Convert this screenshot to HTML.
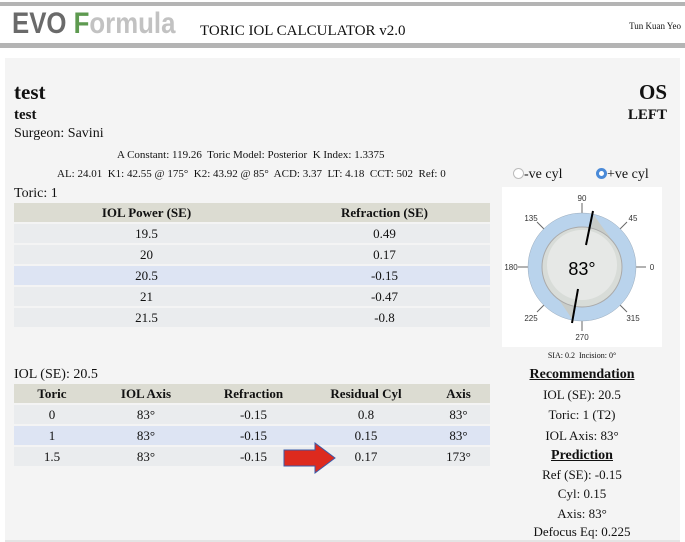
<!DOCTYPE html>
<html><head><style>
body{margin:0;width:685px;height:542px;background:#fff;position:relative;overflow:hidden;font-family:"Liberation Serif",serif;color:#111}
.a{position:absolute;white-space:nowrap}
.bar{position:absolute;left:0;width:685px;background:#aaa}
table{position:absolute;border-collapse:separate;border-spacing:0 2px;font-size:13px}
td,th{text-align:center;padding:0;height:19px}
th{background:#dcdcd2;font-weight:bold}
td{background:#eaecee}
tr.h td{background:#dde4f3}
.r{position:absolute;left:502px;width:160px;text-align:center;font-size:13px}
</style></head><body>
<div class="bar" style="top:2px;height:4px;background:#b4b4b4"></div>
<div class="a" style="left:12px;top:7px;font:bold 30px 'Liberation Sans',sans-serif;transform:scaleX(0.86);transform-origin:0 0"><span style="color:#6a6a6a">EVO </span><span style="color:#5e9a50">F</span><span style="color:#c2c2c2">ormula</span></div>
<div class="a" style="left:200px;top:23px;font-size:15px">TORIC IOL CALCULATOR v2.0</div>
<div class="a" style="right:4px;top:21px;font-size:9px">Tun Kuan Yeo</div>
<div class="bar" style="top:43px;height:5px;background:#b4b4b4"></div>
<div style="position:absolute;left:5px;top:58px;width:675px;height:482px;background:#f4f4f4;border-bottom:2px solid #e4e4e4"></div>
<div class="a" style="left:14px;top:80px;font-size:21px;font-weight:bold">test</div>
<div class="a" style="right:18px;top:80px;font-size:21px;font-weight:bold">OS</div>
<div class="a" style="left:14px;top:107px;font-size:15px;font-weight:bold">test</div>
<div class="a" style="right:18px;top:107px;font-size:15px;font-weight:bold">LEFT</div>
<div class="a" style="left:14px;top:126px;font-size:14px">Surgeon: Savini</div>
<div class="a" style="left:117px;top:149px;font-size:11px">A Constant: 119.26&nbsp; Toric Model: Posterior&nbsp; K Index: 1.3375</div>
<div class="a" style="left:57px;top:168px;font-size:11px">AL: 24.01&nbsp; K1: 42.55 @ 175°&nbsp; K2: 43.92 @ 85°&nbsp; ACD: 3.37&nbsp; LT: 4.18&nbsp; CCT: 502&nbsp; Ref: 0</div>
<div class="a" style="left:513px;top:167px;font-size:14px"><span style="display:inline-block;width:9px;height:9px;border:1px solid #bbb;border-radius:50%;background:#fff;vertical-align:-1px"></span>-ve cyl</div>
<div class="a" style="left:596px;top:167px;font-size:14px"><span style="display:inline-block;width:5px;height:5px;border:3px solid #4a8ad8;border-radius:50%;background:#fff;vertical-align:-1px"></span>+ve cyl</div>
<div class="a" style="left:14px;top:186px;font-size:14px">Toric: 1</div>
<table style="left:14px;top:201px;width:476px">
<tr><th style="width:265px">IOL Power (SE)</th><th>Refraction (SE)</th></tr>
<tr><td>19.5</td><td>0.49</td></tr>
<tr><td>20</td><td>0.17</td></tr>
<tr class="h"><td>20.5</td><td>-0.15</td></tr>
<tr><td>21</td><td>-0.47</td></tr>
<tr><td>21.5</td><td>-0.8</td></tr>
</table>
<svg style="position:absolute;left:502px;top:187px" width="160" height="160" viewBox="0 0 160 160">
<rect width="160" height="160" fill="#fff"/>
<g stroke="#666" stroke-width="1">
<line x1="80" y1="16" x2="80" y2="26"/><line x1="80" y1="134" x2="80" y2="144"/>
<line x1="16" y1="80" x2="26" y2="80"/><line x1="134" y1="80" x2="144" y2="80"/>
<line x1="35" y1="35" x2="43" y2="43"/><line x1="125" y1="35" x2="117" y2="43"/>
<line x1="35" y1="125" x2="43" y2="117"/><line x1="125" y1="125" x2="117" y2="117"/>
</g>
<circle cx="80" cy="80" r="54" fill="#b9d3ec" stroke="#9ab" stroke-width="0.5"/>
<path d="M92 28 Q100 40 108 50 L84 60 Z M70 132 Q62 120 55 110 L76 100 Z" fill="#c8ccc8"/>
<circle cx="80" cy="80" r="40" fill="#d8dcd8" stroke="#aaa"/>
<circle cx="80" cy="78" r="35" fill="#e6e8e6"/>
<line x1="91" y1="24" x2="84" y2="58" stroke="#000" stroke-width="2"/>
<line x1="76" y1="102" x2="70" y2="136" stroke="#000" stroke-width="2"/>
<text x="80" y="88" text-anchor="middle" font-family="Liberation Sans,sans-serif" font-size="18">83°</text>
<g font-family="Liberation Sans,sans-serif" font-size="8" fill="#333" text-anchor="middle">
<text x="80" y="14">90</text><text x="80" y="153">270</text>
<text x="9" y="83">180</text><text x="150" y="83">0</text>
<text x="29" y="34">135</text><text x="131" y="34">45</text>
<text x="29" y="134">225</text><text x="131" y="134">315</text></g>
</svg>
<div class="a" style="left:502px;width:160px;text-align:center;top:351px;font-size:8px">SIA: 0.2&nbsp; Incision: 0°</div>
<div class="a" style="left:14px;top:367px;font-size:14px">IOL (SE): 20.5</div>
<table style="left:14px;top:382px;width:476px">
<tr><th style="width:76px">Toric</th><th style="width:112px">IOL Axis</th><th style="width:103px">Refraction</th><th style="width:122px">Residual Cyl</th><th>Axis</th></tr>
<tr><td>0</td><td>83°</td><td>-0.15</td><td>0.8</td><td>83°</td></tr>
<tr class="h"><td>1</td><td>83°</td><td>-0.15</td><td>0.15</td><td>83°</td></tr>
<tr><td>1.5</td><td>83°</td><td>-0.15</td><td>0.17</td><td>173°</td></tr>
</table>
<svg style="position:absolute;left:283px;top:442px" width="54" height="32"><path d="M1 8 H32 V1 L52 16 L32 31 V24 H1 Z" fill="#dd2a1e" stroke="#3a5aa8" stroke-width="1"/></svg>
<div class="r" style="top:367px;font-weight:bold;text-decoration:underline;font-size:14px">Recommendation</div>
<div class="r" style="top:387px">IOL (SE): 20.5</div>
<div class="r" style="top:407px">Toric: 1 (T2)</div>
<div class="r" style="top:428px">IOL Axis: 83°</div>
<div class="r" style="top:448px;font-weight:bold;text-decoration:underline;font-size:14px">Prediction</div>
<div class="r" style="top:467px">Ref (SE): -0.15</div>
<div class="r" style="top:486px">Cyl: 0.15</div>
<div class="r" style="top:506px">Axis: 83°</div>
<div class="r" style="top:524px">Defocus Eq: 0.225</div>
</body></html>
